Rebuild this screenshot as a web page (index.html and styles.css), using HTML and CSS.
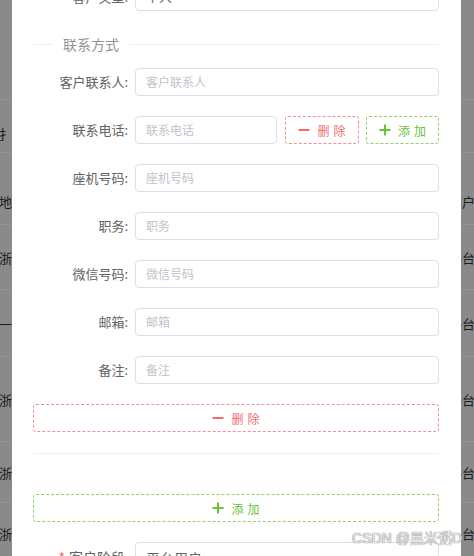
FILE: index.html
```html
<!DOCTYPE html>
<html lang="zh">
<head>
<meta charset="utf-8">
<link rel="stylesheet" href="styles.css">
</head>
<body>
<div class="screen">
  <div class="strip strip-left">
    <div class="srow r1"></div>
    <div class="srow r2"><span>扌</span></div>
    <div class="srow r3"><span>地</span></div>
    <div class="srow r4"><span>浙</span></div>
    <div class="srow r5"><span>一</span></div>
    <div class="srow r6"><span>浙</span></div>
    <div class="srow r7"><span>浙</span></div>
    <div class="srow r8"><span>浙</span></div>
  </div>

  <div class="dialog">
    <div class="form">
      <div class="row">
        <label class="label">客户类型:</label>
        <div class="input value">个人</div>
      </div>

      <div class="divider">
        <span class="dline short"></span>
        <span class="dtext">联系方式</span>
        <span class="dline"></span>
      </div>

      <div class="row">
        <label class="label">客户联系人:</label>
        <div class="input">客户联系人</div>
      </div>
      <div class="row">
        <label class="label">联系电话:</label>
        <div class="input phone">联系电话</div>
        <div class="btn del small">
          <svg width="12" height="12" viewBox="0 0 12 12"><rect x="0.5" y="5" width="11" height="2" fill="#f56c6c"/></svg>
          <span>删除</span>
        </div>
        <div class="btn add small">
          <svg width="12" height="12" viewBox="0 0 12 12"><rect x="0.5" y="5" width="11" height="2" fill="#67c23a"/><rect x="5" y="0.5" width="2" height="11" fill="#67c23a"/></svg>
          <span>添加</span>
        </div>
      </div>
      <div class="row">
        <label class="label">座机号码:</label>
        <div class="input">座机号码</div>
      </div>
      <div class="row">
        <label class="label">职务:</label>
        <div class="input">职务</div>
      </div>
      <div class="row">
        <label class="label">微信号码:</label>
        <div class="input">微信号码</div>
      </div>
      <div class="row">
        <label class="label">邮箱:</label>
        <div class="input">邮箱</div>
      </div>
      <div class="row">
        <label class="label">备注:</label>
        <div class="input">备注</div>
      </div>

      <div class="btn del wide">
        <svg width="12" height="12" viewBox="0 0 12 12"><rect x="0.5" y="5" width="11" height="2" fill="#f56c6c"/></svg>
        <span>删除</span>
      </div>

      <div class="sep"></div>

      <div class="btn add wide last">
        <svg width="12" height="12" viewBox="0 0 12 12"><rect x="0.5" y="5" width="11" height="2" fill="#67c23a"/><rect x="5" y="0.5" width="2" height="11" fill="#67c23a"/></svg>
        <span>添加</span>
      </div>

      <div class="row stage">
        <label class="label"><span class="req">*</span>客户阶段</label>
        <div class="input value">平台用户</div>
      </div>
    </div>
  </div>

  <div class="strip strip-right">
    <div class="srow r1"></div>
    <div class="srow r2"></div>
    <div class="srow r3"><span>客户</span></div>
    <div class="srow r4"><span>平台</span></div>
    <div class="srow r5"><span>平台</span></div>
    <div class="srow r6"><span>平台</span></div>
    <div class="srow r7"><span>平台</span></div>
    <div class="srow r8"><span>平台</span></div>
  </div>

  <div class="watermark">CSDN @黑米粥D</div>
</div>
</body>
</html>
```

FILE: styles.css
```css
* { box-sizing: border-box; }

html, body {
  margin: 0;
  padding: 0;
  background: #8a8a8a;
}

body {
  font-family: "Noto Sans CJK SC", "Noto Sans", sans-serif;
}

.screen {
  position: relative;
  display: flex;
  width: 474px;
  height: 556px;
  overflow: hidden;
}

/* dimmed table behind the dialog */
.strip {
  display: flex;
  flex-direction: column;
  background: #8a8a8a;
  overflow: hidden;
  color: #1c1c1c;
  font-size: 13px;
}

.strip-left { width: 12px; }
.strip-right { width: 13px; }

.srow {
  display: flex;
  align-items: center;
  border-bottom: 1px solid #939393;
  white-space: nowrap;
  flex-shrink: 0;
}

.strip-left .srow { justify-content: flex-end; }
.strip-right .srow span { margin-left: -12px; }

.r1 { height: 100px; }
.r2 { height: 53px; padding-top: 14px; }
.r3 { height: 72px; padding-top: 26px; }
.r4 { height: 65px; }
.r5 { height: 67px; }
.r6 { height: 85px; }
.r7 { height: 61px; }
.r8 { height: 53px; border-bottom: none; padding-top: 8px; }

/* dialog */
.dialog {
  width: 449px;
  background: #ffffff;
  padding: 0 22px 0 21px;
  overflow: hidden;
}

.form {
  margin-top: -17px;
}

.row {
  display: flex;
  height: 28px;
  margin-bottom: 20px;
}

.label {
  width: 102px;
  flex-shrink: 0;
  text-align: right;
  padding-right: 7px;
  line-height: 28px;
  font-size: 13px;
  color: #606266;
}

.row.stage .label {
  font-size: 14px;
  padding-right: 10px;
  line-height: 30px;
}

.req {
  color: #f56c6c;
  margin-right: 4px;
}

.input {
  flex: 1;
  height: 28px;
  border: 1px solid #dcdfe6;
  border-radius: 4px;
  padding: 0 10px;
  line-height: 26px;
  font-size: 12px;
  color: #c0c4cc;
  background: #fff;
}

.input.value {
  color: #606266;
  font-size: 13px;
}

.row.stage .input {
  height: 32px;
  font-size: 14px;
  line-height: 30px;
}

.input.phone {
  flex: none;
  width: 142px;
  margin-right: 8px;
}

/* divider */
.divider {
  display: flex;
  align-items: center;
  height: 20px;
  margin-top: 23px;
  margin-bottom: 14px;
}

.dline {
  flex: 1;
  height: 1px;
  background: #eef0f4;
}

.dline.short {
  flex: none;
  width: 20px;
}

.dtext {
  padding: 0 10px;
  font-size: 14px;
  color: #909399;
}

.sep {
  height: 1px;
  background: #eef0f4;
  margin: 21px 0 40px;
}

/* buttons */
.btn {
  display: flex;
  align-items: center;
  justify-content: center;
  gap: 7px;
  height: 28px;
  border-radius: 3px;
  font-size: 12px;
  letter-spacing: 4px;
  background: #fff;
}

.btn span { margin-right: -4px; }

.btn.del {
  border: 1px dashed #f58f8f;
  color: #f56c6c;
}

.btn.add {
  border: 1px dashed #8fd16a;
  color: #67c23a;
}

.btn.small.del { width: 74px; margin-right: 7px; }
.btn.small.add { width: 73px; }

.btn.wide { width: 100%; }
.btn.wide.last { margin-bottom: 20px; }

.watermark {
  position: absolute;
  right: 12px;
  bottom: 9px;
  font-family: "Liberation Sans", "Noto Sans CJK SC", sans-serif;
  font-size: 14px;
  color: rgba(255, 255, 255, 0.85);
  text-shadow: 0 0 1px #777, 0 0 1px #777;
  white-space: nowrap;
}
```
